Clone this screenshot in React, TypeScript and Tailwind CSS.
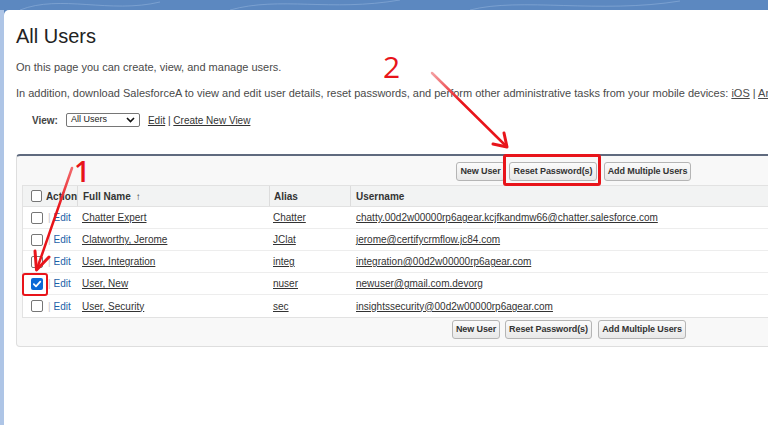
import React from "react";

const users = [
  { name: "Chatter Expert", alias: "Chatter", username: "chatty.00d2w00000rp6agear.kcjfkandmw66@chatter.salesforce.com", checked: false },
  { name: "Clatworthy, Jerome", alias: "JClat", username: "jerome@certifycrmflow.jc84.com", checked: false },
  { name: "User, Integration", alias: "integ", username: "integration@00d2w00000rp6agear.com", checked: false },
  { name: "User, New", alias: "nuser", username: "newuser@gmail.com.devorg", checked: true },
  { name: "User, Security", alias: "sec", username: "insightssecurity@00d2w00000rp6agear.com", checked: false },
];

function Box({ checked }: { checked?: boolean }) {
  if (checked) {
    return (
      <div className="w-[12px] h-[12px] rounded-[2px] bg-[#0b69d6] flex items-center justify-center">
        <svg width="10" height="10" viewBox="0 0 10 10">
          <path d="M1.8 5.2 L4 7.4 L8.3 2.6" fill="none" stroke="#fff" strokeWidth="1.7" strokeLinecap="round" strokeLinejoin="round" />
        </svg>
      </div>
    );
  }
  return <div className="w-[12px] h-[12px] rounded-[2px] border border-[#767676] bg-white" />;
}

function Btn({ label, w }: { label: string; w: string }) {
  return (
    <button
      className={`${w} h-[19px] rounded-[3px] border border-[#b5b5b5] bg-gradient-to-b from-[#fbfbfb] to-[#e8e8e8] text-[9px] font-bold text-[#333] leading-none whitespace-nowrap flex items-center justify-center tracking-[-0.1px]`}
    >
      {label}
    </button>
  );
}

export default function App() {
  return (
    <div
      className="relative w-[768px] h-[425px] overflow-hidden bg-[#5c88c0] text-[#333]"
      style={{ fontFamily: '"Liberation Sans", Arial, sans-serif' }}
    >
      {/* top banner pattern */}
      <svg className="absolute left-0 top-0" width="768" height="10">
        <path d="M20 10 C 60 -6, 110 14, 160 2" fill="none" stroke="#8fb0da" strokeWidth="0.6" />
        <path d="M230 10 C 280 -4, 330 12, 400 0" fill="none" stroke="#8fb0da" strokeWidth="0.6" />
        <path d="M470 10 C 520 -3, 600 14, 680 1" fill="none" stroke="#8fb0da" strokeWidth="0.6" />
      </svg>

      <div className="flex h-full pt-[10px]">
        <div className="w-[4px] bg-[#aec5e6]" />
        <div className="flex-1 bg-white rounded-tl-[5px] pl-[12px] pt-[14px] overflow-hidden">
          <h1 className="text-[20px] leading-[24px] text-[#222]">All Users</h1>
          <p className="mt-[11px] text-[11px] leading-[16px] text-[#4a4a4a] whitespace-nowrap">
            On this page you can create, view, and manage users.
          </p>
          <p className="mt-[10px] text-[11px] leading-[16px] text-[#4a4a4a] whitespace-nowrap">
            In addition, download SalesforceA to view and edit user details, reset passwords, and perform other administrative tasks from your mobile devices:{" "}
            <span className="underline">iOS</span> | <span className="underline">Android</span>
          </p>

          <div className="mt-[11px] pl-[16px] flex items-center h-[16px] text-[10px]">
            <span className="font-bold text-[10px] text-[#444]">View:</span>
            <div className="ml-[8px] w-[74px] h-[14px] border border-[#767676] rounded-[2px] flex items-center justify-between px-[4px]">
              <span className="text-[9px] text-[#222]">All Users</span>
              <svg width="9" height="6" viewBox="0 0 9 6">
                <path d="M1 1 L4.5 4.5 L8 1" fill="none" stroke="#111" strokeWidth="1.6" />
              </svg>
            </div>
            <span className="ml-[8px] text-[#333]">
              <span className="underline">Edit</span> | <span className="underline">Create New View</span>
            </span>
          </div>

          {/* list panel */}
          <div className="mt-[26px] w-[800px] h-[193px] bg-[#f8f8f8] border border-[#dedede] border-t-2 border-t-[#5f6a7e] rounded-[4px]">
            <div className="pt-[6px] pl-[439px] flex">
              <Btn label="New User" w="w-[49px]" />
              <div className="w-[4px]" />
              <Btn label="Reset Password(s)" w="w-[88px]" />
              <div className="w-[7px]" />
              <Btn label="Add Multiple Users" w="w-[87px]" />
            </div>

            <div className="mt-[4px] ml-[5px] border border-[#e2e2e2] bg-white text-[10px]">
              <div className="flex h-[21px] items-center bg-[#f2f3f3] border-b border-[#e2e2e2] font-bold text-[#333]">
                <div className="w-[54px] flex items-center pl-[8px] gap-[4px] h-full">
                  <Box />
                  <span>Action</span>
                </div>
                <div className="w-[192px] h-full flex items-center pl-[5px] border-l border-[#dcdcdc]">
                  Full Name <span className="ml-[5px] font-normal">↑</span>
                </div>
                <div className="w-[81px] h-full flex items-center pl-[4px] border-l border-[#dcdcdc]">Alias</div>
                <div className="flex-1 h-full flex items-center pl-[5px] border-l border-[#dcdcdc]">Username</div>
              </div>
              {users.map((u) => (
                <div key={u.name} className="flex h-[22px] items-center border-b border-[#ededed] last:border-b-0">
                  <div className="w-[54px] flex items-center pl-[8px]">
                    <Box checked={u.checked} />
                    <span className="ml-[5px] text-[#c8c8c8]">|</span>
                    <span className="ml-[3px] text-[#1b5fa8]">Edit</span>
                  </div>
                  <div className="w-[192px] pl-[5px] underline">{u.name}</div>
                  <div className="w-[81px] pl-[4px] underline">{u.alias}</div>
                  <div className="flex-1 pl-[6px] underline whitespace-nowrap">{u.username}</div>
                </div>
              ))}
            </div>

            <div className="mt-[2px] pl-[435px] flex">
              <Btn label="New User" w="w-[48px]" />
              <div className="w-[5px]" />
              <Btn label="Reset Password(s)" w="w-[87px]" />
              <div className="w-[6px]" />
              <Btn label="Add Multiple Users" w="w-[88px]" />
            </div>
          </div>
        </div>
      </div>

      {/* annotations */}
      <div className="absolute left-[22px] top-[273px] w-[26px] h-[23px] border-2 border-[#e8141a] rounded-[3px]" />
      <div className="absolute left-[503px] top-[154px] w-[98px] h-[32px] border-[3px] border-[#e8141a] rounded-[3px]" />
      <span
        className="absolute left-[74px] top-[157px] text-[28px] leading-none font-semibold text-[#e8141a]"
        style={{ fontFamily: '"Open Sans", sans-serif' }}
      >
        1
      </span>
      <span
        className="absolute left-[383px] top-[52px] text-[30px] leading-none text-[#e8141a]"
        style={{ fontFamily: '"Open Sans", sans-serif' }}
      >
        2
      </span>
      <svg className="absolute left-0 top-0 pointer-events-none" width="768" height="425">
        <defs>
          <linearGradient id="fade1" x1="72" y1="168" x2="36" y2="270" gradientUnits="userSpaceOnUse">
            <stop offset="0" stopColor="#f26b6e" />
            <stop offset="0.4" stopColor="#e8141a" />
          </linearGradient>
          <linearGradient id="fade2" x1="432" y1="73" x2="507" y2="147" gradientUnits="userSpaceOnUse">
            <stop offset="0" stopColor="#f4a0a2" />
            <stop offset="0.4" stopColor="#e8141a" />
          </linearGradient>
        </defs>
        <line x1="72" y1="168" x2="38" y2="266" stroke="url(#fade1)" strokeWidth="2.5" strokeLinecap="round" />
        <path d="M35 251 L36.5 270 L49 257" fill="none" stroke="#e8141a" strokeWidth="3" strokeLinecap="round" strokeLinejoin="round" />
        <line x1="432" y1="73" x2="505" y2="145" stroke="url(#fade2)" strokeWidth="2.5" strokeLinecap="round" />
        <path d="M493 144 L507 147 L504 133" fill="none" stroke="#e8141a" strokeWidth="3" strokeLinecap="round" strokeLinejoin="round" />
      </svg>
    </div>
  );
}
